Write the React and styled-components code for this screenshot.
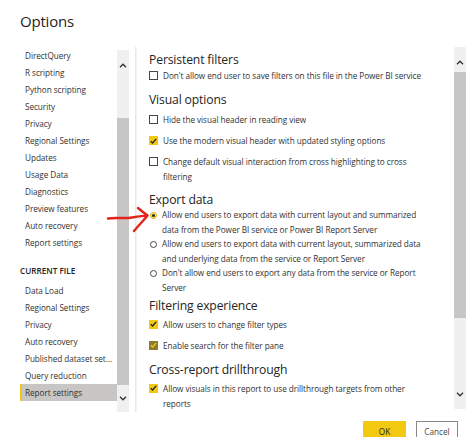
import styled, { createGlobalStyle } from "styled-components"

const GlobalStyle = createGlobalStyle`
    html, body {
        margin: 0;
        padding: 0;
        background: #ffffff;
    }
    body {
        font-family: "Open Sans", "Noto Sans", sans-serif;
        color: #252423;
    }
`

const Window = styled.div`
    position: relative;
    width: 474px;
    height: 437px;
    overflow: hidden;
    background: #ffffff;
`

const Title = styled.h1`
    margin: 0;
    padding: 8px 0 0 20px;
    height: 39px;
    box-sizing: border-box;
    font-size: 15px;
    line-height: 26px;
    font-weight: 400;
    letter-spacing: -0.2px;
    color: #252423;
`

const Body = styled.div`
    display: flex;
    height: 365px;
    margin-top: 8px;
`

const NavPane = styled.div`
    display: flex;
    padding-left: 20px;
`

const NavList = styled.ul`
    list-style: none;
    margin: 0;
    padding: 0;
    width: 97px;
`

const NavItem = styled.li`
    height: 17px;
    line-height: 17px;
    font-size: 8.2px;
    letter-spacing: -0.05px;
    color: #323130;
    white-space: nowrap;
    overflow: hidden;
    text-overflow: ellipsis;
    box-sizing: border-box;
    background: ${props => props.$active ? "#c8c6c4" : "transparent"};
    border-left: ${props => props.$active ? "2px solid #f2c811" : "none"};
    padding-left: ${props => props.$active ? "3px" : "5px"};
    padding-right: 4px;
`

const NavHeader = styled.li`
    height: 23px;
    line-height: 23px;
    margin-top: 8px;
    font-size: 8.2px;
    font-weight: 600;
    color: #252423;
`

const Scrollbar = styled.div`
    display: flex;
    flex-direction: column;
    width: 12px;
    margin-top: ${props => props.$top}px;
    height: ${props => props.$height}px;
    background: #f0f0f0;
`

const ArrowBox = styled.div`
    height: ${props => props.$h}px;
    display: flex;
    align-items: center;
    justify-content: center;
    flex-shrink: 0;
`

const Track = styled.div`
    flex: 1;
    display: flex;
    flex-direction: column;
`

const Thumb = styled.div`
    margin-top: ${props => props.$offset}px;
    height: ${props => props.$size}px;
    background: #c8c6c4;
`

const Divider = styled.div`
    width: 1px;
    margin-left: 6px;
    background: #e8e8e8;
    box-shadow: 1px 0 1px #f2f2f2;
`

const ContentPane = styled.div`
    flex: 1;
    display: flex;
    padding-right: 8px;
`

const Content = styled.div`
    flex: 1;
    padding: 5px 0 0 13px;
`

const Heading = styled.h2`
    margin: ${props => props.$gap ?? 9}px 0 0 0;
    font-size: 12.2px;
    line-height: 16px;
    font-weight: 400;
    letter-spacing: -0.15px;
    color: #252423;
`

const Option = styled.div`
    display: flex;
    align-items: flex-start;
    margin-top: ${props => props.$gap ?? 6}px;
    font-size: 8.2px;
    letter-spacing: -0.05px;
    line-height: ${props => props.$lh ?? 15}px;
    color: #323130;
    padding-right: 24px;
`

const Label = styled.span`
    flex: 1;
`

const Box = styled.span`
    flex-shrink: 0;
    width: 9px;
    height: 9px;
    box-sizing: border-box;
    margin: ${props => (props.$lh - 9) / 2}px 5px 0 0;
    border: 1px solid ${props => props.$checked ? props.$fill : "#484644"};
    background: ${props => props.$checked ? props.$fill : "#ffffff"};
    display: flex;
    align-items: center;
    justify-content: center;
`

const Radio = styled.span`
    flex-shrink: 0;
    width: 7px;
    height: 7px;
    box-sizing: border-box;
    border-radius: 50%;
    margin: ${props => (props.$lh - 7) / 2}px 5px 0 1px;
    border: 1px solid ${props => props.$checked ? "#d9b20f" : "#484644"};
    background: ${props => props.$checked ? "#f7e27a" : "#ffffff"};
    display: flex;
    align-items: center;
    justify-content: center;
`

const Dot = styled.span`
    width: 3px;
    height: 3px;
    border-radius: 50%;
    background: #252423;
`

const Footer = styled.div`
    display: flex;
    justify-content: flex-end;
    gap: 10px;
    padding: 9px 16px 0 0;
`

const Button = styled.button`
    width: ${props => props.$w}px;
    height: 20px;
    padding: 0;
    font-family: inherit;
    font-size: 8.2px;
    color: ${props => props.$primary ? "#252423" : "#484644"};
    background: ${props => props.$primary ? "#f2c811" : "#ffffff"};
    border: 1px solid ${props => props.$primary ? "#f2c811" : "#8a8886"};
    border-radius: 0;
`

const Annotation = styled.svg`
    position: absolute;
    left: 104px;
    top: 203px;
    overflow: visible;
`

function Chevron({ up }) {
    return (
        <svg width="8" height="5" viewBox="0 0 8 5">
            <polyline
                points={up ? "1,4.2 4,1.2 7,4.2" : "1,0.8 4,3.8 7,0.8"}
                fill="none"
                stroke="#323130"
                strokeWidth="1.3"
            />
        </svg>
    )
}

function Check({ color }) {
    return (
        <svg width="7" height="6" viewBox="0 0 7 6">
            <polyline points="0.8,3.2 2.6,5 6.2,0.9" fill="none" stroke={color} strokeWidth="1.3" />
        </svg>
    )
}

function CheckOption({ checked, fill = "#f2c811", mark = "#252423", gap, children }) {
    return (
        <Option $gap={gap}>
            <Box $checked={checked} $fill={fill} $lh={15}>
                {checked && <Check color={mark} />}
            </Box>
            <Label>{children}</Label>
        </Option>
    )
}

function RadioOption({ checked, gap, children }) {
    return (
        <Option $gap={gap} $lh={14.5}>
            <Radio $checked={checked} $lh={14.5}>{checked && <Dot />}</Radio>
            <Label>{children}</Label>
        </Option>
    )
}

const globalItems = [
    "DirectQuery", "R scripting", "Python scripting", "Security", "Privacy",
    "Regional Settings", "Updates", "Usage Data", "Diagnostics", "Preview features",
    "Auto recovery", "Report settings",
]

const fileItems = [
    "Data Load", "Regional Settings", "Privacy", "Auto recovery",
    "Published dataset settings", "Query reduction", "Report settings",
]

export default function App() {
    return <>
        <GlobalStyle />
        <Window>
            <Title>Options</Title>
            <Body>
                <NavPane>
                    <NavList>
                        {globalItems.map(item => <NavItem key={item}>{item}</NavItem>)}
                        <NavHeader>CURRENT FILE</NavHeader>
                        {fileItems.map((item, i) => (
                            <NavItem key={item} $active={i === fileItems.length - 1}>{item}</NavItem>
                        ))}
                    </NavList>
                    <Scrollbar $top={3} $height={362}>
                        <ArrowBox $h={30}><Chevron up /></ArrowBox>
                        <Track>
                            <Thumb $offset={38} $size={267} />
                        </Track>
                        <ArrowBox $h={27}><Chevron /></ArrowBox>
                    </Scrollbar>
                </NavPane>
                <Divider />
                <ContentPane>
                    <Content>
                        <Heading $gap={0}>Persistent filters</Heading>
                        <CheckOption gap={0}>Don't allow end user to save filters on this file in the Power BI service</CheckOption>

                        <Heading>Visual options</Heading>
                        <CheckOption gap={4}>Hide the visual header in reading view</CheckOption>
                        <CheckOption checked>Use the modern visual header with updated styling options</CheckOption>
                        <CheckOption>Change default visual interaction from cross highlighting to cross filtering</CheckOption>

                        <Heading $gap={8}>Export data</Heading>
                        <RadioOption checked gap={0}>Allow end users to export data with current layout and summarized data from the Power BI service or Power BI Report Server</RadioOption>
                        <RadioOption gap={0}>Allow end users to export data with current layout, summarized data and underlying data from the service or Report Server</RadioOption>
                        <RadioOption gap={0}>Don't allow end users to export any data from the service or Report Server</RadioOption>

                        <Heading $gap={3}>Filtering experience</Heading>
                        <CheckOption checked gap={2.5}>Allow users to change filter types</CheckOption>
                        <CheckOption checked fill="#8c7a2e" mark="#f2c811">Enable search for the filter pane</CheckOption>

                        <Heading $gap={9}>Cross-report drillthrough</Heading>
                        <CheckOption checked gap={3}>Allow visuals in this report to use drillthrough targets from other reports</CheckOption>
                    </Content>
                    <Scrollbar $top={0} $height={362}>
                        <ArrowBox $h={30}><Chevron up /></ArrowBox>
                        <Track>
                            <Thumb $offset={-5} $size={246} />
                        </Track>
                        <ArrowBox $h={30}><Chevron /></ArrowBox>
                    </Scrollbar>
                </ContentPane>
            </Body>
            <Footer>
                <Button $primary $w={43}>OK</Button>
                <Button $w={42}>Cancel</Button>
            </Footer>
            <Annotation width="46" height="32" viewBox="0 0 46 32">
                <path d="M4,15.5 C12,14 20,16 28,14.5 C34,13.5 39,13 43,12.5" fill="none" stroke="#e3231c" strokeWidth="2.4" strokeLinecap="round" />
                <path d="M34,5 C37,7.5 40,10 43.5,12.5 C40,17 35,22 30,28" fill="none" stroke="#e3231c" strokeWidth="2.4" strokeLinecap="round" strokeLinejoin="round" />
            </Annotation>
        </Window>
    </>
}
